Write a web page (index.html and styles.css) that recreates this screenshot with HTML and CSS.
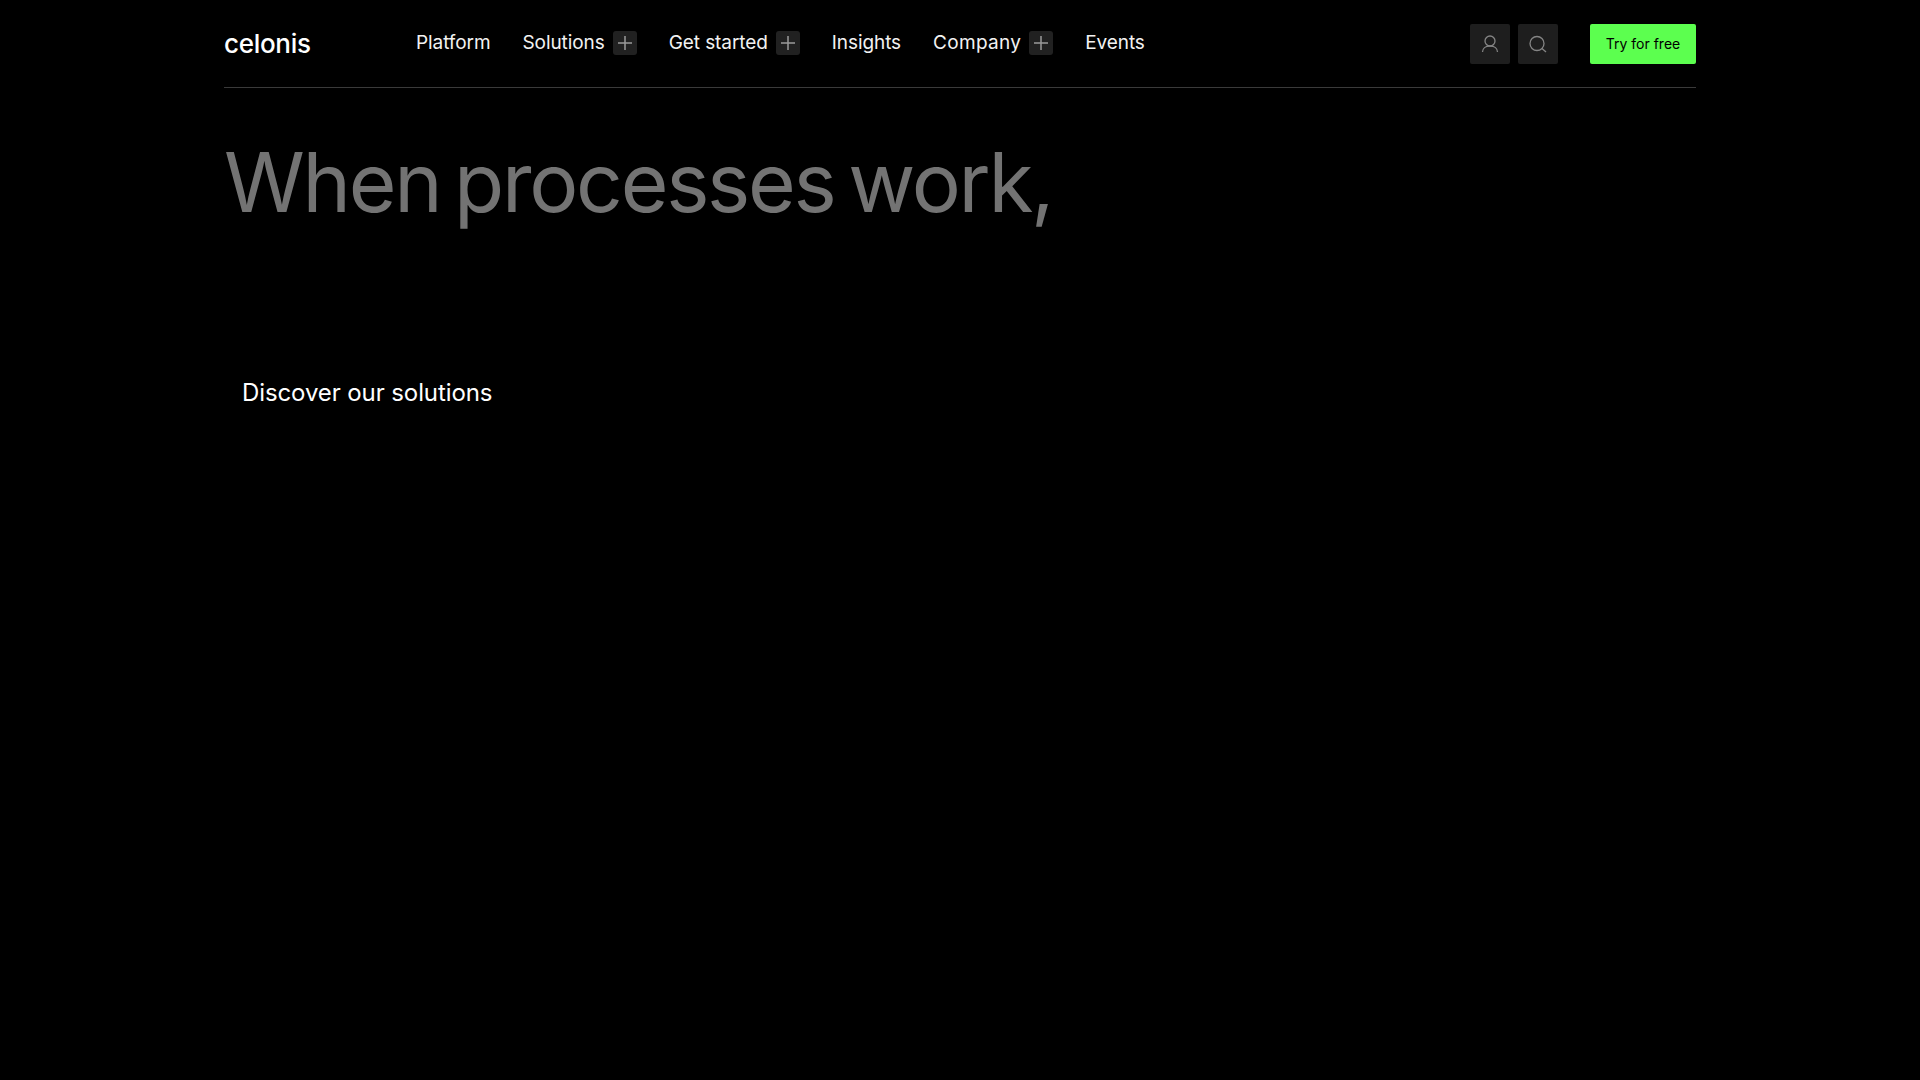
FILE: index.html
```html
<!DOCTYPE html>
<html lang="en">
<head>
  <meta charset="UTF-8">
  <meta name="viewport" content="width=device-width, initial-scale=1.0">
  <title>Celonis</title>
  <link rel="stylesheet" href="styles.css">
</head>
<body>
  <div class="page">
    <header class="site-header">
      <a class="logo" href="#">celonis</a>
      <nav class="main-nav">
        <a class="nav-link" href="#">Platform</a>
        <a class="nav-link" href="#">Solutions <span class="plus"><svg viewBox="0 0 24 24"><path d="M12 5v14M5 12h14"/></svg></span></a>
        <a class="nav-link" href="#">Get started <span class="plus"><svg viewBox="0 0 24 24"><path d="M12 5v14M5 12h14"/></svg></span></a>
        <a class="nav-link" href="#">Insights</a>
        <a class="nav-link wide" href="#">Company <span class="plus"><svg viewBox="0 0 24 24"><path d="M12 5v14M5 12h14"/></svg></span></a>
        <a class="nav-link" href="#">Events</a>
      </nav>
      <div class="header-actions">
        <button class="icon-btn" aria-label="Account">
          <svg viewBox="0 0 40 40"><circle cx="20" cy="17" r="5"/><path d="M12.500 28c0-3.500 3-6 7.500-6s7.500 2.500 7.500 6"/></svg>
        </button>
        <button class="icon-btn" aria-label="Search">
          <svg viewBox="0 0 40 40"><circle cx="19" cy="19.500" r="7"/><path d="M24 24.500l4 3.500"/></svg>
        </button>
        <a class="try-btn" href="#">Try for free</a>
      </div>
    </header>
    <main>
      <h1 class="headline">When processes work,</h1>
      <p class="discover">Discover our solutions</p>
    </main>
  </div>
</body>
</html>
```
FILE: styles.css
```css
body {
  margin: 0;
  background-color: #000;
  color: #fff;
  font-family: Inter, "Liberation Sans", sans-serif;
}
a {
  color: inherit;
  text-decoration: none;
}
.page {
  width: 1472px;
  margin: 0 auto;
  min-height: 1080px;
}
.site-header {
  display: flex;
  align-items: center;
  height: 87px;
  border-bottom: 1px solid #3a3a3a;
}
.logo {
  width: 192px;
  font-size: 26px;
  font-weight: 500;
  letter-spacing: -0.3px;
}
.main-nav {
  display: flex;
  align-items: center;
  gap: 32px;
  margin-bottom: 2px;
}
.nav-link {
  display: flex;
  align-items: center;
  gap: 8px;
  font-size: 19px;
  line-height: 24px;
  letter-spacing: -0.08px;
  color: #f2f2f2;
}
.nav-link.wide {
  letter-spacing: 0.3px;
}
.plus {
  display: flex;
  align-items: center;
  justify-content: center;
  width: 24px;
  height: 24px;
  border-radius: 3px;
  background-color: #212121;
}
.plus svg {
  width: 24px;
  height: 24px;
  fill: none;
  stroke: #9a9a9a;
  stroke-width: 1.5;
}
.header-actions {
  display: flex;
  align-items: center;
  margin-left: auto;
  gap: 8px;
}
.icon-btn {
  width: 40px;
  height: 40px;
  padding: 0;
  border: none;
  border-radius: 2px;
  background-color: #1e1e1e;
}
.icon-btn svg {
  display: block;
  width: 40px;
  height: 40px;
  fill: none;
  stroke: #858585;
  stroke-width: 1.3;
}
.try-btn {
  display: flex;
  align-items: center;
  justify-content: center;
  width: 106px;
  height: 40px;
  margin-left: 24px;
  border-radius: 2px;
  background-color: #5cff4f;
  color: #000;
  font-size: 14px;
}
.headline {
  margin: 0;
  padding-top: 45px;
  font-size: 82px;
  line-height: 100px;
  font-weight: 400;
  letter-spacing: -2.3px;
  word-spacing: -7px;
  color: #737373;
}
.discover {
  margin: 0;
  padding: 142px 0 0 18px;
  font-size: 24px;
  line-height: 36px;
  letter-spacing: -0.1px;
}
```
